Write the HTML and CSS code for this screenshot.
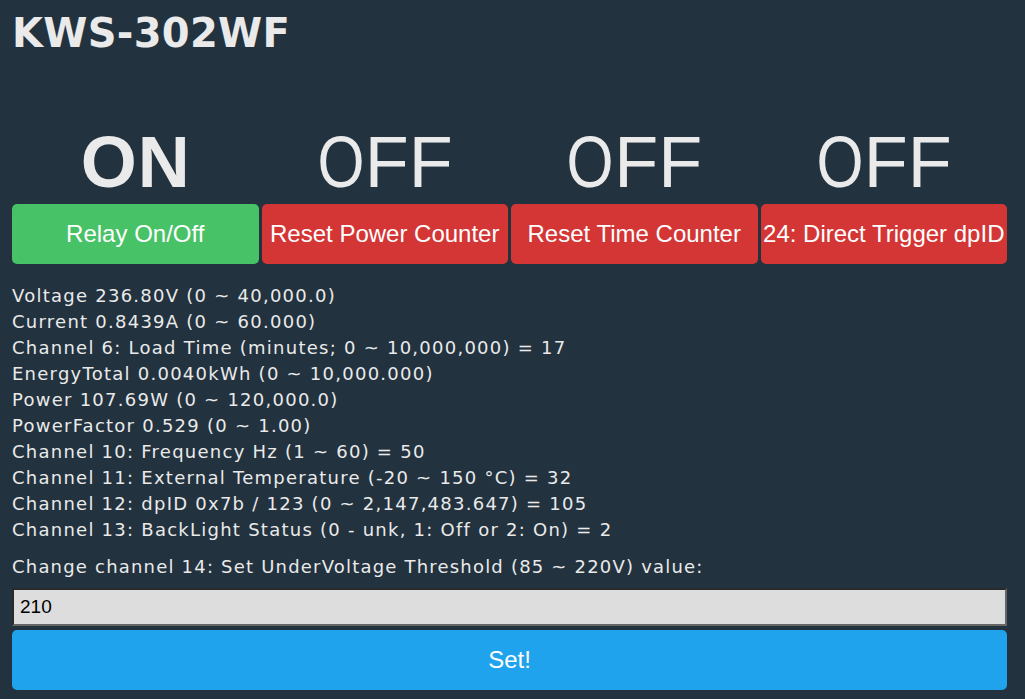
FILE: index.html
```html
<!DOCTYPE html>
<html>
<head>
<meta charset="utf-8">
<title>KWS-302WF</title>
<link rel="stylesheet" href="styles.css">
</head>
<body>
<div class="page">
  <h1 class="title">KWS-302WF</h1>
  <div class="states">
    <div class="state on">ON</div>
    <div class="state"><span class="o">O</span>FF</div>
    <div class="state"><span class="o">O</span>FF</div>
    <div class="state"><span class="o">O</span>FF</div>
  </div>
  <div class="buttons">
    <button class="btn green">Relay On/Off</button>
    <button class="btn red">Reset Power Counter</button>
    <button class="btn red">Reset Time Counter</button>
    <button class="btn red">24: Direct Trigger dpID</button>
  </div>
  <div class="readings">
    <div>Voltage 236.80V (0 ~ 40,000.0)</div>
    <div>Current 0.8439A (0 ~ 60.000)</div>
    <div>Channel 6: Load Time (minutes; 0 ~ 10,000,000) = 17</div>
    <div>EnergyTotal 0.0040kWh (0 ~ 10,000.000)</div>
    <div>Power 107.69W (0 ~ 120,000.0)</div>
    <div>PowerFactor 0.529 (0 ~ 1.00)</div>
    <div>Channel 10: Frequency Hz (1 ~ 60) = 50</div>
    <div>Channel 11: External Temperature (-20 ~ 150 °C) = 32</div>
    <div>Channel 12: dpID 0x7b / 123 (0 ~ 2,147,483.647) = 105</div>
    <div>Channel 13: BackLight Status (0 - unk, 1: Off or 2: On) = 2</div>
  </div>
  <form class="setform">
    <label class="setlabel" for="val">Change channel 14: Set UnderVoltage Threshold (85 ~ 220V) value:</label>
    <input id="val" class="field" type="text" value="210">
    <button type="button" class="btn blue">Set!</button>
  </form>
</div>
</body>
</html>
```

FILE: styles.css
```css
html, body {
  margin: 0;
  padding: 0;
  background: #22323f;
}
.page {
  width: 995px;
  padding: 0 12px;
  color: #eaeaea;
  font-family: "DejaVu Sans", Verdana, sans-serif;
}
.title {
  margin: 0;
  padding-top: 9px;
  font-size: 40px;
  line-height: 48px;
  font-weight: bold;
  color: #eaeaea;
  letter-spacing: 0.3px;
}
.states {
  margin-top: 69px;
  display: grid;
  grid-template-columns: repeat(4, 1fr);
  column-gap: 3px;
}
.state {
  text-align: center;
  font-family: "Liberation Sans", Arial, sans-serif;
  font-size: 72px;
  line-height: 72px;
  color: #eaeaea;
  white-space: nowrap;
}
.state .o {
  display: inline-block;
  transform: scaleX(0.84);
  margin: 0 -4px;
}
.state.on {
  font-weight: bold;
  letter-spacing: 1px;
  text-indent: 1px;
}
.buttons {
  margin-top: 6px;
  display: grid;
  grid-template-columns: repeat(4, 1fr);
  column-gap: 3px;
}
.btn {
  display: block;
  height: 60px;
  width: 100%;
  border: 0;
  border-radius: 5px;
  padding: 0;
  margin: 0;
  color: #ffffff;
  font-family: "Liberation Sans", Arial, sans-serif;
  font-size: 24px;
  white-space: nowrap;
  overflow: hidden;
  cursor: pointer;
}
.green { background: #47c266; }
.red { background: #d43535; }
.blue { background: #1fa3ec; }
.readings {
  margin-top: 19px;
  font-size: 18px;
  line-height: 26px;
  letter-spacing: 1.25px;
}
.setform {
  margin: 0;
  padding-top: 11px;
}
.setlabel {
  display: block;
  font-size: 18px;
  line-height: 26px;
  letter-spacing: 1.2px;
}
.field {
  display: block;
  box-sizing: border-box;
  width: 100%;
  height: 38px;
  margin: 8px 0 4px 0;
  padding: 0 6px;
  background: #dddddd;
  color: #000000;
  border: 2px solid;
  border-color: #2a2a2a #666666 #666666 #2a2a2a;
  font-family: "Liberation Sans", Arial, sans-serif;
  font-size: 19px;
  border-radius: 0;
  outline: none;
}
```
